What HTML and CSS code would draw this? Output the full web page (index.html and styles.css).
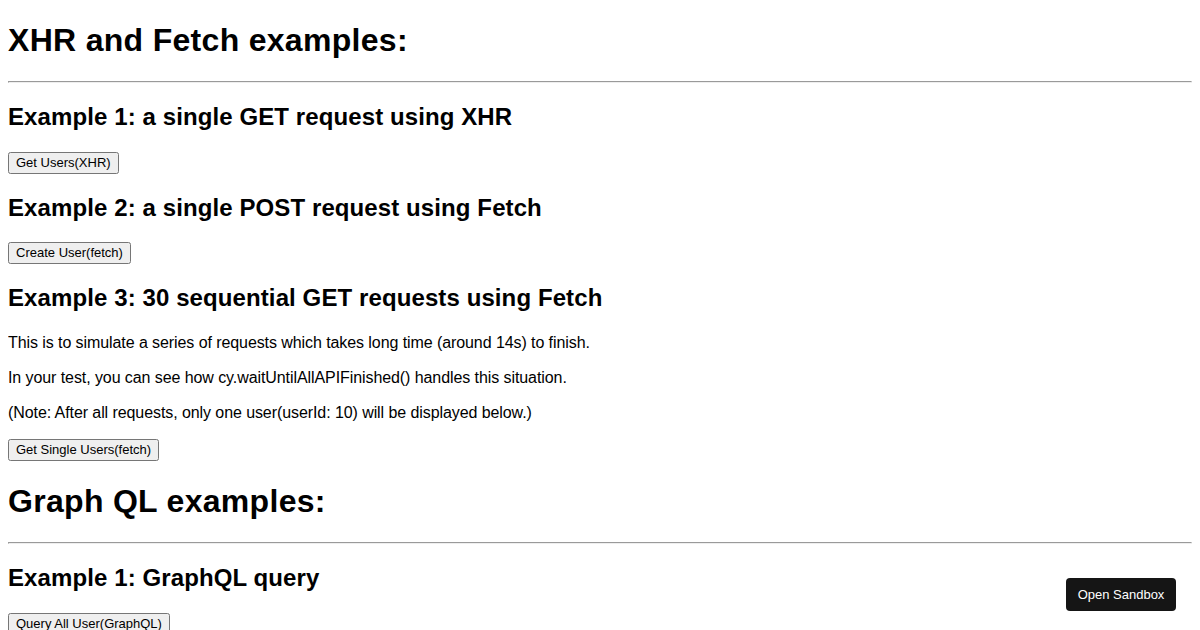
FILE: index.html
```html
<!DOCTYPE html>
<html>
<head>
<meta charset="utf-8">
<title>Examples</title>
<link rel="stylesheet" href="styles.css">
</head>
<body>
<h1>XHR and Fetch examples:</h1>
<hr>
<h2>Example 1: a single GET request using XHR</h2>
<button class="btn">Get Users(XHR)</button>
<h2>Example 2: a single POST request using Fetch</h2>
<button class="btn">Create User(fetch)</button>
<h2>Example 3: 30 sequential GET requests using Fetch</h2>
<p>This is to simulate a series of requests which takes long time (around 14s) to finish.</p>
<p>In your test, you can see how cy.waitUntilAllAPIFinished() handles this situation.</p>
<p>(Note: After all requests, only one user(userId: 10) will be displayed below.)</p>
<button class="btn">Get Single Users(fetch)</button>
<h1>Graph QL examples:</h1>
<hr>
<h2>Example 1: GraphQL query</h2>
<button class="btn">Query All User(GraphQL)</button>
<button class="sandbox">Open Sandbox</button>
</body>
</html>
```
FILE: styles.css
```css
body {
  margin: 0 8px;
  font-family: "Liberation Sans", Arial, sans-serif;
  color: #000;
  background: #fff;
  line-height: 1.2;
}
h1 {
  letter-spacing: 0.3px;
}
h2 {
  letter-spacing: 0.1px;
  line-height: 28.8px;
}
p {
  letter-spacing: -0.08px;
}
.btn {
  font-family: "Liberation Sans", Arial, sans-serif;
  font-size: 13px;
  line-height: 16px;
}
.sandbox {
  position: fixed;
  right: 24px;
  bottom: 19px;
  width: 110px;
  height: 33px;
  background: #151515;
  color: #fff;
  border: none;
  border-radius: 4px;
  font-family: "Liberation Sans", Arial, sans-serif;
  font-size: 13px;
}
```
